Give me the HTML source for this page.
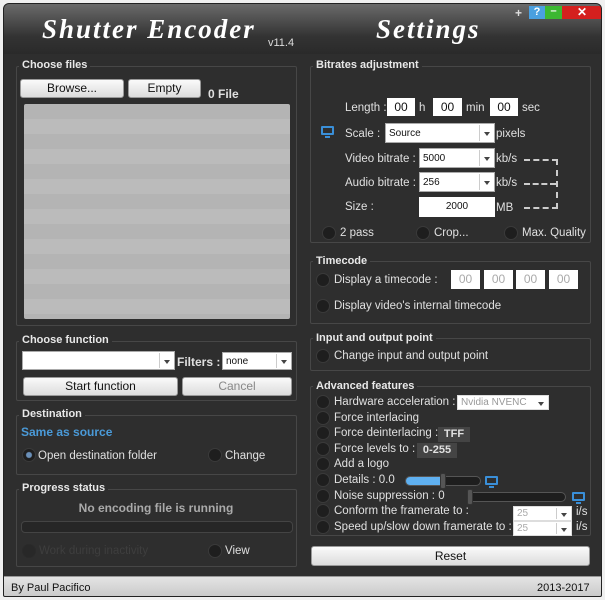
<!DOCTYPE html>
<html><head><style>
*{box-sizing:border-box;margin:0;padding:0}
body{width:605px;height:600px;background:#f0f0f0;font-family:"Liberation Sans",sans-serif;font-size:11px;color:#e0e0e0;position:relative;overflow:hidden}
.win{position:absolute;left:3px;top:3px;width:599px;height:594px;background:#2e2e2e;border:1px solid #222;border-radius:6px 6px 2px 2px;overflow:hidden}
.title{position:absolute;left:0;top:0;width:100%;height:50px;background:linear-gradient(#6a6a6a,#333 65%,#2a2a2a)}
.a{position:absolute;white-space:nowrap;line-height:13px}
.t{font-size:11.5px}
.box{position:absolute;border:1px solid #474747;border-radius:2px}
.lg{position:absolute;font-weight:bold;font-size:11px;color:#e8e8e8;background:#2e2e2e;padding:0 3px;white-space:nowrap;line-height:13px}
.btn{position:absolute;background:linear-gradient(#fafafa,#dcdcdc);border:1px solid #999;border-radius:3px;color:#111;font-size:12px;text-align:center}
.rad{position:absolute;width:14px;height:14px;border-radius:50%;background:#1e1e1e;border:1px solid #3a3a3a}
.in{position:absolute;background:#fff;color:#111;font-size:12px;text-align:center}
.sel{position:absolute;background:#fff;color:#111;font-size:10px;padding-left:3px;border:1px solid #aaa;display:flex;align-items:center}
.sel:after{content:"";position:absolute;right:4px;top:50%;margin-top:-1px;border:3px solid transparent;border-top:4px solid #444}
.sel i{position:absolute;right:14px;top:1px;bottom:1px;border-left:1px solid #ccc}
.mon{position:absolute;width:13px;height:9px;border:2px solid #3a8fd8;border-radius:1px}
.mon:after{content:"";position:absolute;left:2px;bottom:-5px;width:5px;height:2px;background:#3a8fd8}
</style></head><body>
<div class="win">
<div class="title"></div>
<div class="a" style="left:38px;top:10px;line-height:30px;font:italic bold 27px 'Liberation Serif',serif;color:#fff;letter-spacing:2px">Shutter Encoder</div>
<div class="a" style="left:264px;top:33px;font-size:11px;color:#ddd">v11.4</div>
<div class="a" style="left:372px;top:10px;line-height:30px;font:italic bold 27px 'Liberation Serif',serif;color:#fff;letter-spacing:2px">Settings</div>
<div class="a" style="left:511px;top:3px;width:12px;height:12px;color:#ddd;font-weight:bold;font-size:12px">+</div>
<div class="a" style="left:525px;top:2px;width:16px;height:13px;background:#4aa0e0;color:#fff;font-weight:bold;text-align:center;font-size:11px">?</div>
<div class="a" style="left:541px;top:2px;width:17px;height:13px;background:#3cb832;color:#fff;font-weight:bold;text-align:center;line-height:11px">–</div>
<div class="a" style="left:558px;top:2px;width:40px;height:13px;background:#d4201e;color:#fff;font-weight:bold;text-align:center;font-size:12px;line-height:13px">✕</div>

<!-- left panels -->
<div class="box" style="left:12px;top:62px;width:281px;height:260px"></div>
<div class="lg" style="left:15px;top:55px">Choose files</div>
<div class="btn" style="left:16px;top:75px;width:104px;height:19px;line-height:17px">Browse...</div>
<div class="btn" style="left:124px;top:75px;width:73px;height:19px;line-height:16px">Empty</div>
<div class="a" style="left:204px;top:84px;font-weight:bold;font-size:12px">0 File</div>
<div class="a" style="left:20px;top:100px;width:266px;height:215px;background:repeating-linear-gradient(#b4b4b4 0 15px,#bbbbbb 15px 30px);border-radius:2px"></div>

<div class="box" style="left:12px;top:337px;width:281px;height:60px"></div>
<div class="lg" style="left:15px;top:330px">Choose function</div>
<div class="sel" style="left:18px;top:347px;width:153px;height:19px"><i></i></div>
<div class="a" style="left:173px;top:352px;font-weight:bold;font-size:12px">Filters :</div>
<div class="sel" style="left:218px;top:348px;width:70px;height:18px">none<i></i></div>
<div class="btn" style="left:19px;top:373px;width:155px;height:19px;line-height:17px">Start function</div>
<div class="btn" style="left:178px;top:373px;width:110px;height:19px;line-height:17px;color:#888">Cancel</div>

<div class="box" style="left:12px;top:411px;width:281px;height:60px"></div>
<div class="lg" style="left:15px;top:404px">Destination</div>
<div class="a" style="left:17px;top:422px;color:#4a9ad8;font-weight:bold;font-size:12px">Same as source</div>
<div class="rad" style="left:18px;top:444px;background:radial-gradient(#6a8fb8 30%,#1e1e1e 40%)"></div>
<div class="a t" style="left:34px;top:446px">Open destination folder</div>
<div class="rad" style="left:204px;top:444px"></div>
<div class="a t" style="left:221px;top:446px">Change</div>

<div class="box" style="left:12px;top:485px;width:281px;height:78px"></div>
<div class="lg" style="left:15px;top:478px">Progress status</div>
<div class="a" style="left:0;width:304px;text-align:center;top:498px;font-weight:bold;font-size:12px;color:#aaa">No encoding file is running</div>
<div class="a" style="left:17px;top:517px;width:272px;height:12px;border:1px solid #444;border-radius:4px;background:#262626"></div>
<div class="rad" style="left:18px;top:540px;border-color:#2a2a2a;background:#282828"></div>
<div class="a t" style="left:35px;top:541px;color:#3e3e3e">Work during inactivity</div>
<div class="rad" style="left:204px;top:540px"></div>
<div class="a t" style="left:221px;top:541px">View</div>

<!-- right panels -->
<div class="box" style="left:306px;top:62px;width:281px;height:177px"></div>
<div class="lg" style="left:309px;top:55px">Bitrates adjustment</div>
<div class="a t" style="left:341px;top:98px">Length :</div>
<div class="in" style="left:383px;top:94px;width:28px;height:18px;line-height:18px">00</div>
<div class="a t" style="left:415px;top:98px">h</div>
<div class="in" style="left:429px;top:94px;width:29px;height:18px;line-height:18px">00</div>
<div class="a t" style="left:462px;top:98px">min</div>
<div class="in" style="left:486px;top:94px;width:28px;height:18px;line-height:18px">00</div>
<div class="a t" style="left:518px;top:98px">sec</div>
<div class="mon" style="left:317px;top:122px"></div>
<div class="a t" style="left:341px;top:124px">Scale :</div>
<div class="sel" style="left:381px;top:119px;width:110px;height:20px">Source<i></i></div>
<div class="a t" style="left:492px;top:124px">pixels</div>
<div class="a t" style="left:341px;top:149px">Video bitrate :</div>
<div class="sel" style="left:415px;top:144px;width:76px;height:20px">5000<i></i></div>
<div class="a t" style="left:492px;top:149px">kb/s</div>
<div class="a t" style="left:341px;top:173px">Audio bitrate :</div>
<div class="sel" style="left:415px;top:168px;width:76px;height:20px">256<i></i></div>
<div class="a t" style="left:492px;top:173px">kb/s</div>
<div class="a t" style="left:341px;top:197px">Size :</div>
<div class="in" style="left:415px;top:193px;width:76px;height:20px;line-height:20px;font-size:10px">2000</div>
<div class="a t" style="left:492px;top:198px">MB</div>
<div class="a" style="left:520px;top:155px;width:34px;height:50px;border:2px dashed #ccc;border-left:none"></div>
<div class="a" style="left:520px;top:179px;width:32px;border-top:2px dashed #ccc"></div>
<div class="rad" style="left:318px;top:222px"></div>
<div class="a t" style="left:336px;top:223px">2 pass</div>
<div class="rad" style="left:412px;top:222px"></div>
<div class="a t" style="left:430px;top:223px">Crop...</div>
<div class="rad" style="left:500px;top:222px"></div>
<div class="a t" style="left:518px;top:223px">Max. Quality</div>

<div class="box" style="left:306px;top:257px;width:281px;height:63px"></div>
<div class="lg" style="left:309px;top:251px">Timecode</div>
<div class="rad" style="left:312px;top:269px"></div>
<div class="a t" style="left:330px;top:270px">Display a timecode :</div>
<div class="in" style="left:447px;top:266px;width:29px;height:19px;line-height:19px;color:#aaa">00</div>
<div class="in" style="left:480px;top:266px;width:29px;height:19px;line-height:19px;color:#aaa">00</div>
<div class="in" style="left:512px;top:266px;width:29px;height:19px;line-height:19px;color:#aaa">00</div>
<div class="in" style="left:545px;top:266px;width:29px;height:19px;line-height:19px;color:#aaa">00</div>
<div class="rad" style="left:312px;top:295px"></div>
<div class="a t" style="left:330px;top:296px">Display video's internal timecode</div>

<div class="box" style="left:306px;top:334px;width:281px;height:33px"></div>
<div class="lg" style="left:309px;top:328px">Input and output point</div>
<div class="rad" style="left:312px;top:345px"></div>
<div class="a t" style="left:330px;top:346px">Change input and output point</div>

<div class="box" style="left:306px;top:382px;width:281px;height:150px"></div>
<div class="lg" style="left:309px;top:376px">Advanced features</div>
<div class="rad" style="left:312px;top:391px"></div><div class="a t" style="left:330px;top:392px">Hardware acceleration :</div>
<div class="sel" style="left:453px;top:391px;width:92px;height:15px;color:#999;border-color:#ddd">Nvidia NVENC</div>
<div class="rad" style="left:312px;top:407px"></div><div class="a t" style="left:330px;top:408px">Force interlacing</div>
<div class="rad" style="left:312px;top:422px"></div><div class="a t" style="left:330px;top:423px">Force deinterlacing :</div>
<div class="a" style="left:434px;top:423px;width:32px;height:15px;background:#444;text-align:center;font-weight:bold;line-height:15px">TFF</div>
<div class="rad" style="left:312px;top:438px"></div><div class="a t" style="left:330px;top:439px">Force levels to :</div>
<div class="a" style="left:413px;top:439px;width:40px;height:15px;background:#444;text-align:center;font-weight:bold;line-height:15px">0-255</div>
<div class="rad" style="left:312px;top:453px"></div><div class="a t" style="left:330px;top:454px">Add a logo</div>
<div class="rad" style="left:312px;top:469px"></div><div class="a t" style="left:330px;top:470px">Details : 0.0</div>
<div class="a" style="left:401px;top:472px;width:76px;height:10px;border:1px solid #555;border-radius:5px;background:#1e1e1e"></div>
<div class="a" style="left:402px;top:473px;width:37px;height:8px;border-radius:4px 0 0 4px;background:#5fb0f0"></div>
<div class="a" style="left:436px;top:469px;width:6px;height:16px;background:#555;border:1px solid #333;border-radius:2px"></div>
<div class="mon" style="left:481px;top:472px"></div>
<div class="rad" style="left:312px;top:485px"></div><div class="a t" style="left:330px;top:486px">Noise suppression : 0</div>
<div class="a" style="left:464px;top:488px;width:98px;height:10px;border:1px solid #555;border-radius:5px;background:#1e1e1e"></div>
<div class="a" style="left:463px;top:485px;width:6px;height:16px;background:#555;border:1px solid #333;border-radius:2px"></div>
<div class="mon" style="left:568px;top:488px"></div>
<div class="rad" style="left:312px;top:500px"></div><div class="a t" style="left:330px;top:501px">Conform the framerate to :</div>
<div class="sel" style="left:509px;top:502px;width:59px;height:15px;color:#aaa;border-color:#ddd">25<i></i></div>
<div class="a t" style="left:572px;top:502px">i/s</div>
<div class="rad" style="left:312px;top:516px"></div><div class="a t" style="left:330px;top:517px">Speed up/slow down framerate to :</div>
<div class="sel" style="left:509px;top:517px;width:59px;height:15px;color:#aaa;border-color:#ddd">25<i></i></div>
<div class="a t" style="left:572px;top:517px">i/s</div>

<div class="btn" style="left:307px;top:542px;width:279px;height:20px;line-height:18px">Reset</div>

<div class="a" style="left:0;top:572px;width:599px;height:22px;background:linear-gradient(#e4e4e4,#c8c8c8);border-top:1px solid #999"></div>
<div class="a" style="left:7px;top:578px;color:#111;font-size:11px">By Paul Pacifico</div>
<div class="a" style="left:533px;top:578px;color:#111;font-size:11px">2013-2017</div>
</div>
</body></html>
